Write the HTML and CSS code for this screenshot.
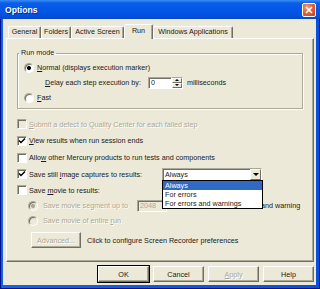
FILE: index.html
```html
<html lang="en">
  <head>
    <meta charset="UTF-8" />
    <link rel="stylesheet" href="styles.css">
    <title>Options</title>
  </head>
  <body>
    <div class="window">
      <div class="titlebar">
        <span class="title">Options</span>
        <span class="close">
          <svg width="8" height="8" viewBox="0 0 8 8">
            <path d="M1 1 L7 7 M7 1 L1 7" stroke="#fff" stroke-width="1.6" />
          </svg>
        </span>
      </div>

      <div class="content">
        <div class="tabs">
          <div class="tab tab-general">General</div>
          <div class="tab tab-folders">Folders</div>
          <div class="tab tab-active-screen">Active Screen</div>
          <div class="tab tab-run active">Run</div>
          <div class="tab tab-windows">Windows Applications</div>
        </div>

        <div class="panel">
          <fieldset class="group">
            <legend>Run mode</legend>
            <div class="opt">
              <span class="radio checked"></span>
              <span><u>N</u>ormal (displays execution marker)</span>
            </div>
            <div class="opt delay">
              <span><u>D</u>elay each step execution by:</span>
              <span class="field field-delay">0</span>
              <span class="spin">
                <span class="spin-btn"><i class="arrow-up"></i></span>
                <span class="spin-btn"><i class="arrow-down"></i></span>
              </span>
              <span class="ms">milliseconds</span>
            </div>
            <div class="opt">
              <span class="radio"></span>
              <span><u>F</u>ast</span>
            </div>
          </fieldset>

          <div class="row row-submit disabled">
            <span class="check"></span>
            <span class="label"><u>S</u>ubmit a defect to Quality Center for each failed step</span>
          </div>
          <div class="row row-view">
            <span class="check">
              <svg width="8" height="8" viewBox="0 0 8 8"><path d="M1 3.5 L3 5.5 L7 1.5" stroke="#000" stroke-width="1.5" fill="none" /></svg>
            </span>
            <span class="label"><u>V</u>iew results when run session ends</span>
          </div>
          <div class="row row-allow">
            <span class="check"></span>
            <span class="label">Allo<u>w</u> other Mercury products to run tests and components</span>
          </div>
          <div class="row row-still">
            <span class="check">
              <svg width="8" height="8" viewBox="0 0 8 8"><path d="M1 3.5 L3 5.5 L7 1.5" stroke="#000" stroke-width="1.5" fill="none" /></svg>
            </span>
            <span class="label still-label">Save still <u>i</u>mage captures to results:</span>
            <div class="select">
              <span class="select-value">Always</span>
              <span class="select-btn"><i class="arrow-down"></i></span>
              <ul class="dropdown">
                <li class="selected">Always</li>
                <li>For errors</li>
                <li>For errors and warnings</li>
              </ul>
            </div>
          </div>
          <div class="row row-movie">
            <span class="check"></span>
            <span class="label">Save <u>m</u>ovie to results:</span>
          </div>
          <div class="row row-segment sub">
            <span class="radio checked disabled"></span>
            <span class="label dim">Save movie segment up to</span>
            <span class="field field-size">2048</span>
            <span class="label kb">KB of movie for each error and warning</span>
          </div>
          <div class="row row-entire sub">
            <span class="radio disabled"></span>
            <span class="label dim">Save movie of entire <u>r</u>un</span>
          </div>
          <div class="row row-advanced">
            <span class="btn btn-advanced dim">Advanced...</span>
            <span class="label">Click to configure Screen Recorder preferences</span>
          </div>
        </div>

        <div class="buttons">
          <span class="btn btn-default">OK</span>
          <span class="btn">Cancel</span>
          <span class="btn dim"><u>A</u>pply</span>
          <span class="btn">Help</span>
        </div>
      </div>
    </div>
  </body>
</html>
```

FILE: styles.css
```css
*,
*::after,
*::before {
  margin: 0;
  padding: 0;
  box-sizing: border-box;
}

body {
  width: 320px;
  height: 289px;
  overflow: hidden;
  font-family: "Liberation Sans", Arial, sans-serif;
  font-size: 7.2px;
  color: #1a1a1a;
}

u {
  text-decoration: underline;
  text-underline-offset: 1px;
}

/* window frame */
.window {
  width: 320px;
  height: 289px;
  display: flex;
  flex-direction: column;
  background: linear-gradient(90deg, #0a3cc0 0, #1663e6 2px, #0a4fd8 100%);
  box-shadow: inset 0 0 0 1px #00138c;
}
.titlebar {
  height: 19px;
  flex: none;
  display: flex;
  align-items: center;
  justify-content: space-between;
  padding: 0 4px 0 5px;
  background: linear-gradient(#3a8cf8 0, #0a5fe6 3px, #0457e8 45%, #0250df 85%, #0c46c0 100%);
}
.title {
  color: #fff;
  font-weight: bold;
  font-size: 8.6px;
  text-shadow: 1px 1px #0b2a8e;
}
.close {
  width: 14px;
  height: 14px;
  margin-top: 1px;
  border: 1px solid #fff;
  border-radius: 2px;
  background: radial-gradient(circle at 35% 30%, #f2a283 0, #e0643c 45%, #c4401a 100%);
  display: flex;
  align-items: center;
  justify-content: center;
}

.content {
  flex: 1;
  margin: 0 4px 4px 3px;
  background: #ece9d8;
  padding: 5px 2px 3px 3px;
  display: flex;
  flex-direction: column;
}

/* tabs */
.tabs {
  height: 14px;
  display: flex;
  align-items: flex-end;
  padding-left: 2px;
  position: relative;
  z-index: 1;
}
.tab {
  height: 12px;
  line-height: 10px;
  text-align: center;
  border: 1px solid;
  border-bottom: none;
  border-color: #fff #716f64 transparent #fff;
  border-radius: 2px 2px 0 0;
  box-shadow: inset -1px 0 #aca899;
  background: #ece9d8;
}
.tab-general { width: 33px; }
.tab-folders { width: 30px; }
.tab-active-screen { width: 53px; }
.tab-run { width: 29px; }
.tab-windows { width: 80px; }
.tab.active {
  height: 15px;
  line-height: 12px;
  margin-bottom: -1px;
}

.panel {
  height: 224px;
  border: 1px solid;
  border-color: #fff #716f64 #716f64 #fff;
  box-shadow: inset -1px -1px #aca899;
  padding: 9px 10px 0 10px;
}

/* run mode group */
.group {
  border: 1px solid #aca899;
  box-shadow: inset 1px 1px #fff, 1px 1px #fff;
  padding: 2px 0 3px 1px;
}
.group legend {
  padding: 0 2px;
  line-height: 10px;
}
.opt {
  height: 15px;
  display: flex;
  align-items: center;
  gap: 3px;
  padding-left: 5px;
  white-space: nowrap;
}
.opt.delay {
  padding-left: 26px;
  gap: 0;
}

.radio {
  width: 10px;
  height: 10px;
  flex: none;
  border-radius: 50%;
  border: 1px solid;
  border-color: #aca899 #fff #fff #aca899;
  box-shadow: inset 1px 1px #716f64;
  background: #fff;
}
.radio.checked {
  background: radial-gradient(circle, #000 0 1.7px, #fff 2.3px);
}
.radio.disabled {
  background: #ece9d8;
}
.radio.checked.disabled {
  background: radial-gradient(circle, #aca899 0 1.7px, #ece9d8 2.3px);
}

.check {
  width: 10px;
  height: 10px;
  flex: none;
  border: 1px solid;
  border-color: #aca899 #fff #fff #aca899;
  box-shadow: inset 1px 1px #716f64;
  background: #fff;
  display: flex;
  align-items: center;
  justify-content: center;
}
.disabled .check {
  background: #ece9d8;
}

.field {
  height: 12px;
  flex: none;
  line-height: 10px;
  padding-left: 2px;
  border: 1px solid;
  border-color: #aca899 #fff #fff #aca899;
  box-shadow: inset 1px 1px #716f64;
  background: #fff;
}
.field-delay {
  width: 24px;
  margin-left: 7px;
}
.spin {
  width: 11px;
  height: 12px;
  display: flex;
  flex-direction: column;
  border: 1px solid;
  border-color: #aca899 #fff #fff transparent;
  border-left: none;
}
.spin-btn {
  flex: 1;
  display: flex;
  align-items: center;
  justify-content: center;
  border: 1px solid;
  border-color: #fff #716f64 #716f64 #fff;
  background: #ece9d8;
}
.ms {
  margin-left: 4px;
}

.arrow-up,
.arrow-down {
  width: 0;
  height: 0;
  border-left: 2px solid transparent;
  border-right: 2px solid transparent;
}
.arrow-up {
  border-bottom: 2px solid #000;
}
.arrow-down {
  border-top: 2px solid #000;
}
.select-btn .arrow-down {
  border-left-width: 3px;
  border-right-width: 3px;
  border-top-width: 3px;
}

/* option rows */
.row {
  display: flex;
  align-items: center;
  gap: 2px;
  height: 16px;
}
.label {
  white-space: nowrap;
}
.row-submit {
  margin-top: 7px;
}
.row-view,
.row-allow {
  height: 17px;
}
.row-segment,
.row-entire {
  height: 15px;
}
.row.sub {
  padding-left: 11px;
  gap: 0;
}
.sub .label.dim {
  margin-left: 5px;
}

.disabled .label,
.dim {
  color: #aca899;
  text-shadow: 1px 1px #fff;
}

.still-label {
  width: 131px;
  flex: none;
}

.select {
  position: relative;
  width: 100px;
  height: 13px;
  display: flex;
  align-items: center;
  border: 1px solid;
  border-color: #aca899 #fff #fff #aca899;
  box-shadow: inset 1px 1px #716f64;
  background: #fff;
}
.select-value {
  flex: 1;
  padding-left: 2px;
}
.select-btn {
  width: 11px;
  height: 11px;
  display: flex;
  align-items: center;
  justify-content: center;
  border: 1px solid;
  border-color: #fff #716f64 #716f64 #fff;
  background: #ece9d8;
}
.dropdown {
  position: absolute;
  top: 100%;
  left: -1px;
  width: 101px;
  list-style: none;
  border: 1px solid #000;
  background: #fff;
  z-index: 2;
}
.dropdown li {
  height: 9px;
  line-height: 9px;
  padding-left: 2px;
}
.dropdown li.selected {
  background: #316ac5;
  color: #fff;
}

.field-size {
  width: 30px;
  margin-left: 9px;
  color: #aca899;
  background: #ece9d8;
}
.kb {
  margin-left: 8px;
}

.row-advanced {
  margin-top: 4px;
  gap: 6px;
}

/* buttons */
.btn {
  display: flex;
  align-items: center;
  justify-content: center;
  height: 16px;
  width: 51px;
  border: 1px solid;
  border-color: #fff #716f64 #716f64 #fff;
  box-shadow: inset -1px -1px #aca899;
  background: #ece9d8;
}
.btn-advanced {
  width: 50px;
  margin-left: 14px;
}
.btn-default {
  outline: 1px solid #000;
}

.buttons {
  margin-top: 4px;
  display: flex;
  justify-content: flex-end;
  gap: 4px;
}
```
